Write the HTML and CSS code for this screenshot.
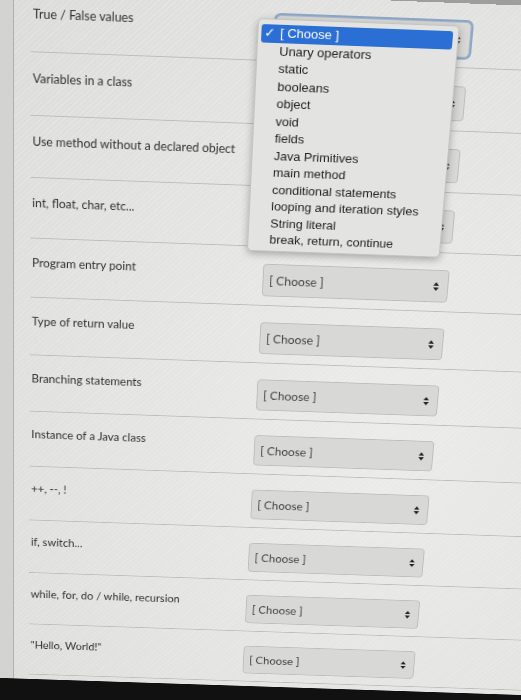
FILE: index.html
```html
<html>
<head>
<link rel="stylesheet" href="styles.css">
</head>
<body>
<div class="sheet">
    <div class="quiz">
        <div class="match-row">
            <div class="match-label">True / False values</div>
            <div class="select focused"><span></span><svg class="arrows" width="6" height="10" viewBox="0 0 6 10"><path d="M3 0L6 4H0Z M0 6H6L3 10Z"/></svg></div>
        </div>
        <div class="match-row">
            <div class="match-label">Variables in a class</div>
            <div class="select"><span>[ Choose ]</span><svg class="arrows" width="6" height="10" viewBox="0 0 6 10"><path d="M3 0L6 4H0Z M0 6H6L3 10Z"/></svg></div>
        </div>
        <div class="match-row">
            <div class="match-label">Use method without a declared object</div>
            <div class="select"><span>[ Choose ]</span><svg class="arrows" width="6" height="10" viewBox="0 0 6 10"><path d="M3 0L6 4H0Z M0 6H6L3 10Z"/></svg></div>
        </div>
        <div class="match-row">
            <div class="match-label">int, float, char, etc...</div>
            <div class="select"><span>[ Choose ]</span><svg class="arrows" width="6" height="10" viewBox="0 0 6 10"><path d="M3 0L6 4H0Z M0 6H6L3 10Z"/></svg></div>
        </div>
        <div class="match-row">
            <div class="match-label">Program entry point</div>
            <div class="select"><span>[ Choose ]</span><svg class="arrows" width="6" height="10" viewBox="0 0 6 10"><path d="M3 0L6 4H0Z M0 6H6L3 10Z"/></svg></div>
        </div>
        <div class="match-row">
            <div class="match-label">Type of return value</div>
            <div class="select"><span>[ Choose ]</span><svg class="arrows" width="6" height="10" viewBox="0 0 6 10"><path d="M3 0L6 4H0Z M0 6H6L3 10Z"/></svg></div>
        </div>
        <div class="match-row">
            <div class="match-label">Branching statements</div>
            <div class="select"><span>[ Choose ]</span><svg class="arrows" width="6" height="10" viewBox="0 0 6 10"><path d="M3 0L6 4H0Z M0 6H6L3 10Z"/></svg></div>
        </div>
        <div class="match-row">
            <div class="match-label">Instance of a Java class</div>
            <div class="select"><span>[ Choose ]</span><svg class="arrows" width="6" height="10" viewBox="0 0 6 10"><path d="M3 0L6 4H0Z M0 6H6L3 10Z"/></svg></div>
        </div>
        <div class="match-row">
            <div class="match-label">++, --, !</div>
            <div class="select"><span>[ Choose ]</span><svg class="arrows" width="6" height="10" viewBox="0 0 6 10"><path d="M3 0L6 4H0Z M0 6H6L3 10Z"/></svg></div>
        </div>
        <div class="match-row">
            <div class="match-label">if, switch...</div>
            <div class="select"><span>[ Choose ]</span><svg class="arrows" width="6" height="10" viewBox="0 0 6 10"><path d="M3 0L6 4H0Z M0 6H6L3 10Z"/></svg></div>
        </div>
        <div class="match-row">
            <div class="match-label">while, for, do / while, recursion</div>
            <div class="select"><span>[ Choose ]</span><svg class="arrows" width="6" height="10" viewBox="0 0 6 10"><path d="M3 0L6 4H0Z M0 6H6L3 10Z"/></svg></div>
        </div>
        <div class="match-row last">
            <div class="match-label">"Hello, World!"</div>
            <div class="select"><span>[ Choose ]</span><svg class="arrows" width="6" height="10" viewBox="0 0 6 10"><path d="M3 0L6 4H0Z M0 6H6L3 10Z"/></svg></div>
        </div>
    </div>
    <div class="bezel"></div>

    <ul class="menu">
        <li class="active"><span class="check">&#10003;</span>[ Choose ]</li>
        <li><span class="check"></span>Unary operators</li>
        <li><span class="check"></span>static</li>
        <li><span class="check"></span>booleans</li>
        <li><span class="check"></span>object</li>
        <li><span class="check"></span>void</li>
        <li><span class="check"></span>fields</li>
        <li><span class="check"></span>Java Primitives</li>
        <li><span class="check"></span>main method</li>
        <li><span class="check"></span>conditional statements</li>
        <li><span class="check"></span>looping and iteration styles</li>
        <li><span class="check"></span>String literal</li>
        <li><span class="check"></span>break, return, continue</li>
    </ul>
</div>
</body>
</html>
```

FILE: styles.css
```css
html, body {
    margin: 0;
    height: 100%;
    overflow: hidden;
    background: #9e9e9c;
}

/* the photo was taken at an angle: tilt the whole sheet */
.sheet {
    position: relative;
    width: 680px;
    margin: -14px 0 0 -20px;
    background:
        linear-gradient(to right, #d3d3d1 33px, transparent 33px),
        repeating-linear-gradient(135deg, rgba(255, 255, 255, .18) 0 1px, transparent 1px 4px),
        radial-gradient(ellipse at 65% 45%, #ebebe9 0%, #e2e2e0 55%, #d9d9d7 100%);
    transform-origin: 33px 14px;
    transform: perspective(1000px) rotateX(-11deg) skewY(2.2deg);
    font-family: Lato, "Liberation Sans", sans-serif;
    color: #333;
}

.quiz {
    margin-left: 33px;
    border-left: 1px solid #aeaeac;
    padding: 0 0 6px 17px;
}

.match-row {
    display: grid;
    grid-template-columns: 246px 197px;
    align-items: start;
    height: 67px;
    box-sizing: border-box;
    border-bottom: 1px solid #bdbdbb;
}

.match-label {
    padding: 20px 0 0 2px;
    font-size: 12.5px;
    line-height: 16px;
}

.select {
    display: flex;
    align-items: center;
    justify-content: space-between;
    margin-top: 19px;
    height: 37px;
    box-sizing: border-box;
    padding: 0 9px 0 6px;
    border: 1px solid #bdbdbb;
    border-radius: 4px;
    background: #d8d8d6;
    font-size: 13px;
    color: #444;
}

.select.focused {
    border-color: #a9b8cc;
    box-shadow: 0 0 0 2px #8ea6c6;
    border-radius: 5px;
}

.arrows {
    fill: #222;
}

.bezel {
    height: 260px;
    background: #111;
}

.menu {
    position: absolute;
    left: 279px;
    top: 23px;
    width: 201px;
    margin: 0;
    padding: 5px 0 2px;
    list-style: none;
    background: #e3e3e1;
    border: 1px solid #c4c4c2;
    border-radius: 5px;
    box-shadow: 0 3px 9px rgba(0, 0, 0, .28);
    font-family: "Liberation Sans", Arial, sans-serif;
    font-size: 13px;
    color: #1d1d1d;
}

.menu li {
    display: flex;
    height: 18.5px;
    line-height: 18.5px;
    margin: 0 5px 0 3px;
    padding-left: 3px;
    white-space: nowrap;
}

.menu li.active {
    background: #2b6fd4;
    color: #fff;
    border-radius: 3px;
}

.check {
    width: 16px;
    flex: none;
}
```
